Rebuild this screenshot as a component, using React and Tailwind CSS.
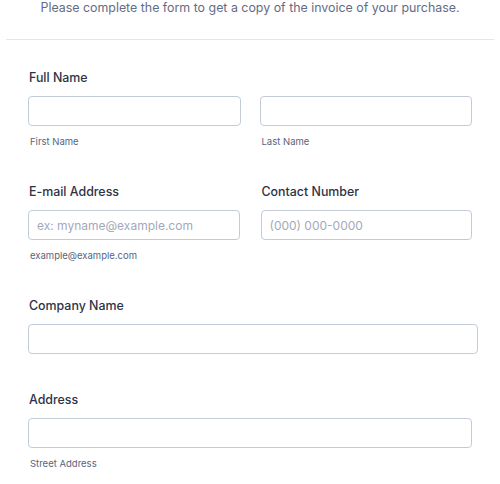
import React from "react";

const font = { fontFamily: "Inter, 'Liberation Sans', sans-serif" };

const Label = ({ children }) => (
  <div className="text-[12.4px] leading-[18px] font-medium text-[#2c3345] pl-[1px] pt-[1px] mb-[9px]">
    {children}
  </div>
);

const Sub = ({ children }) => (
  <div className="text-[9.5px] leading-[14px] text-[#57647e] pl-[2px] mt-[9px] mb-[-1px]">
    {children}
  </div>
);

const Input = ({ placeholder, wide }) => (
  <input
    type="text"
    placeholder={placeholder}
    className={`block h-[30px] ${wide ? "w-[450px]" : "w-full"} rounded-[4px] border border-[#c3cad8] bg-white px-[8px] text-[12px] text-[#2c3345] placeholder:text-[#a3a9bb] outline-none`}
  />
);

export default function App() {
  return (
    <div className="w-[500px] h-[484px] overflow-hidden bg-white px-[6px]" style={font}>
      <p className="text-center text-[12.4px] leading-[15px] text-[#646b85]">
        Please complete the form to get a copy of the invoice of your purchase.
      </p>
      <div className="mt-[24px] border-t border-[#e3e5ed]" />

      <div className="px-[22px] pt-[28px]">
        {/* Full Name */}
        <Label>Full Name</Label>
        <div className="grid grid-cols-2 gap-x-[19px]">
          <div>
            <Input />
            <Sub>First Name</Sub>
          </div>
          <div>
            <Input />
            <Sub>Last Name</Sub>
          </div>
        </div>

        {/* Email / Contact */}
        <div className="grid grid-cols-2 gap-x-[21px] mt-[34px]">
          <div>
            <Label>E-mail Address</Label>
            <Input placeholder="ex: myname@example.com" />
            <Sub>example@example.com</Sub>
          </div>
          <div>
            <Label>Contact Number</Label>
            <Input placeholder="(000) 000-0000" />
          </div>
        </div>

        {/* Company */}
        <div className="mt-[34px]">
          <Label>Company Name</Label>
          <Input wide />
        </div>

        {/* Address */}
        <div className="mt-[36px]">
          <Label>Address</Label>
          <Input />
          <Sub>Street Address</Sub>
        </div>
      </div>
    </div>
  );
}
